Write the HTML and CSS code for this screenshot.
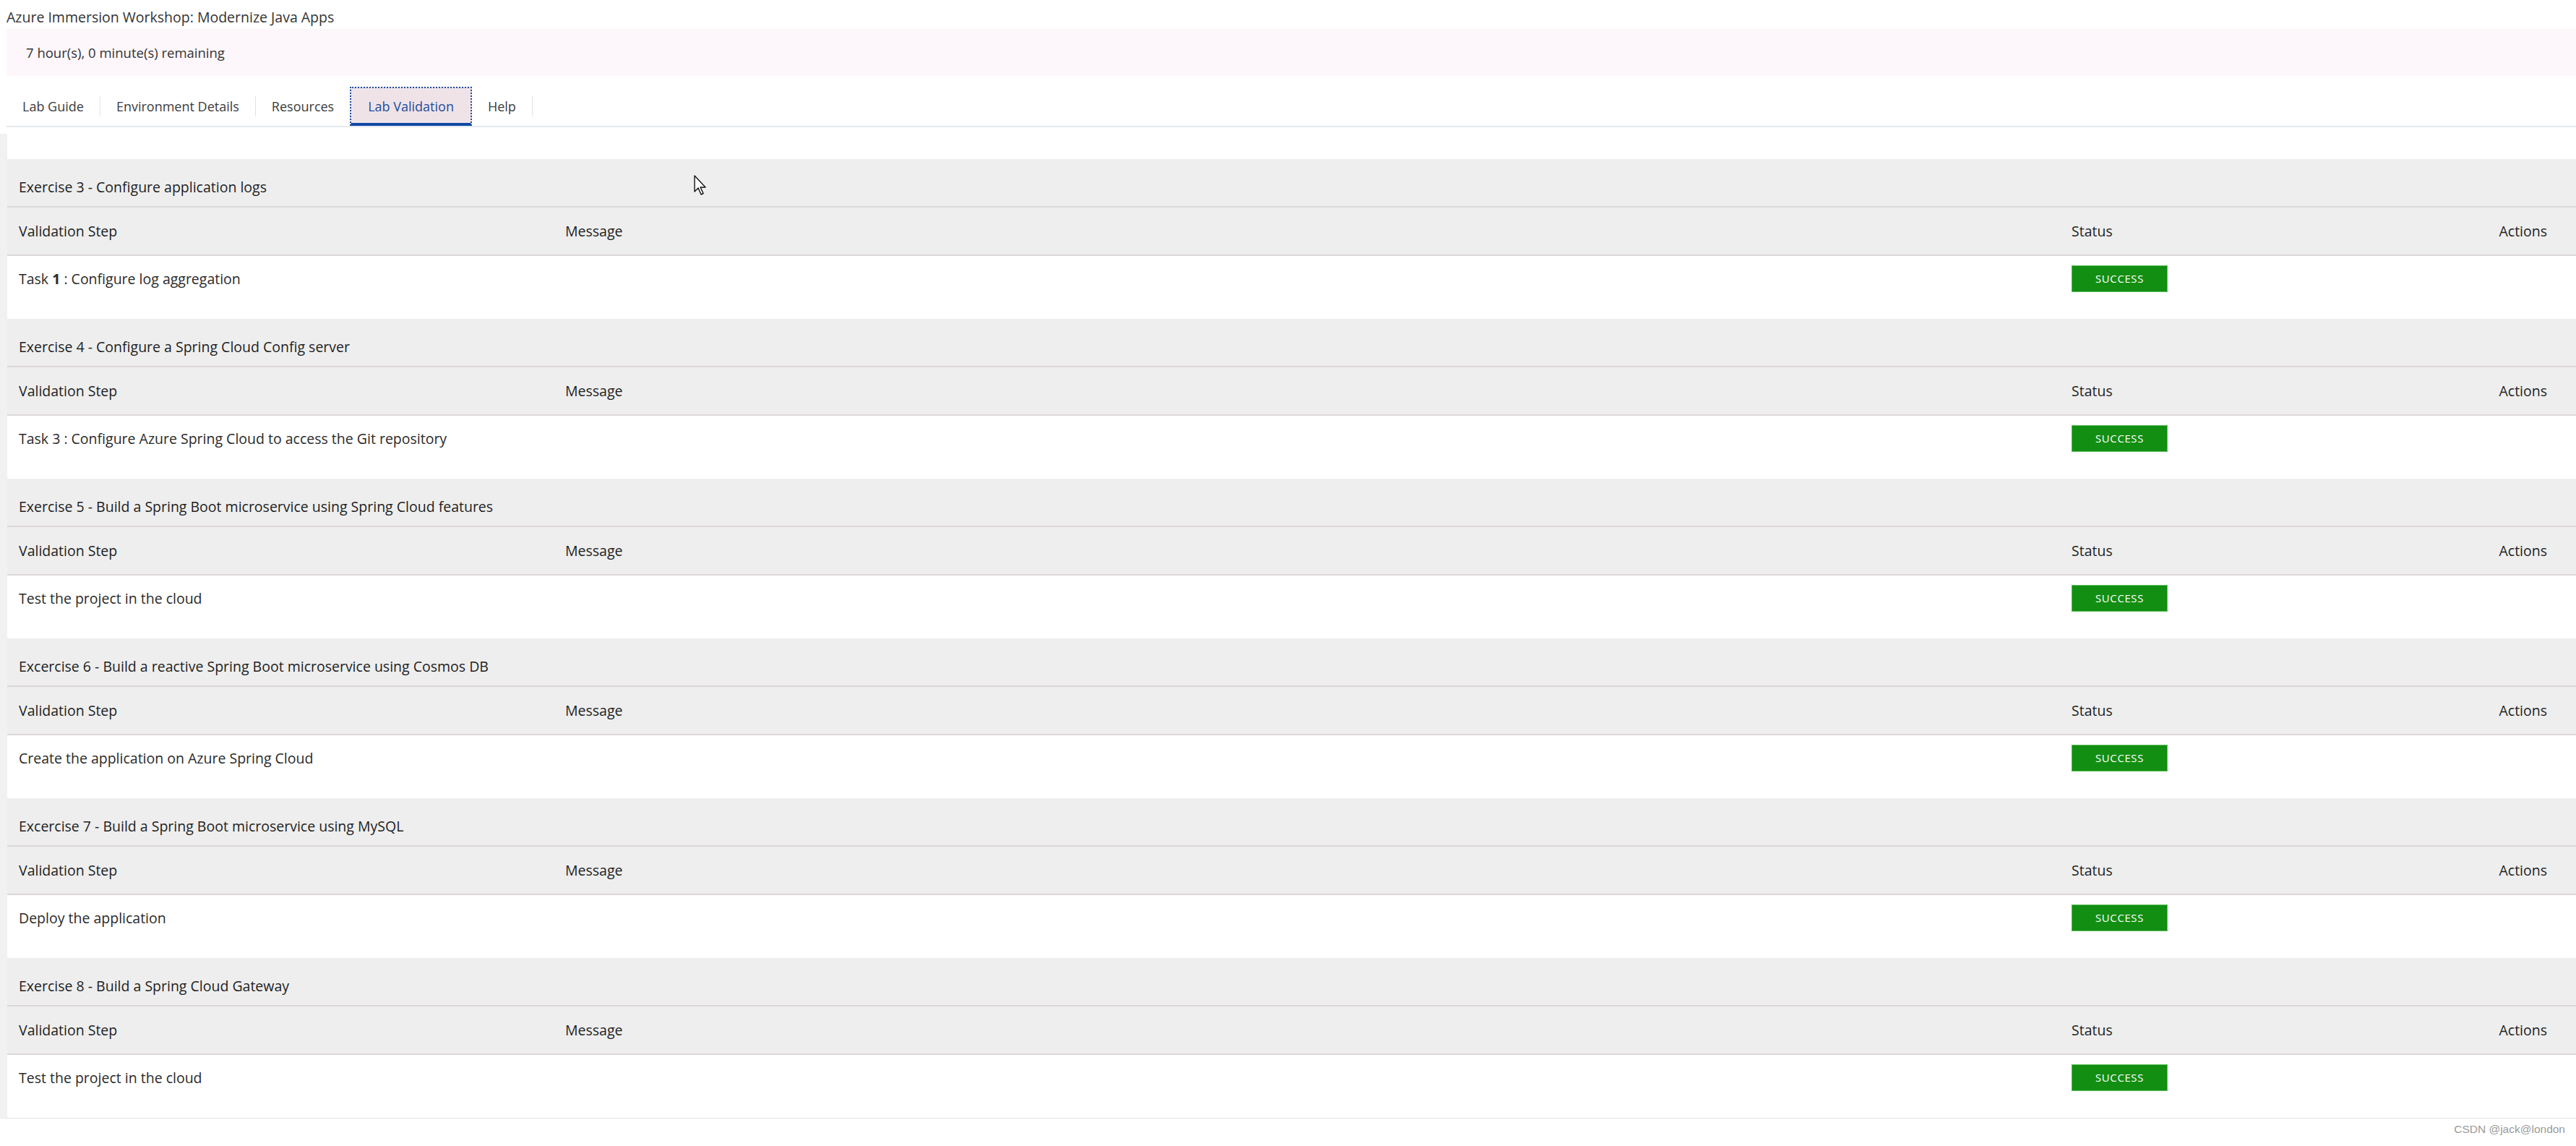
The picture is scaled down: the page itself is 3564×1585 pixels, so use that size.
FILE: index.html
```html
<!DOCTYPE html>
<html lang="en">
<head>
<meta charset="utf-8">
<title>Lab Validation</title>
<link rel="stylesheet" href="styles.css">
</head>
<body>
<div class="page">
  <div class="title">Azure Immersion Workshop: Modernize Java Apps</div>
  <div class="banner">7 hour(s), 0 minute(s) remaining</div>
  <nav class="tabs">
    <a class="tab">Lab Guide</a><span class="sep"></span>
    <a class="tab">Environment Details</a><span class="sep"></span>
    <a class="tab">Resources</a>
    <a class="tab active">Lab Validation</a>
    <a class="tab">Help</a><span class="sep"></span>
  </nav>
  <main class="main">
    <section class="ex">
      <div class="ex-head">Exercise 3 - Configure application logs</div>
      <div class="grid col-head"><div>Validation Step</div><div>Message</div><div>Status</div><div>Actions</div></div>
      <div class="grid row"><div class="cell">Task <b>1</b> : Configure log aggregation</div><div class="cell"></div><div><span class="badge">SUCCESS</span></div><div></div></div>
    </section>
    <section class="ex">
      <div class="ex-head">Exercise 4 - Configure a Spring Cloud Config server</div>
      <div class="grid col-head"><div>Validation Step</div><div>Message</div><div>Status</div><div>Actions</div></div>
      <div class="grid row"><div class="cell">Task 3 : Configure Azure Spring Cloud to access the Git repository</div><div class="cell"></div><div><span class="badge">SUCCESS</span></div><div></div></div>
    </section>
    <section class="ex">
      <div class="ex-head">Exercise 5 - Build a Spring Boot microservice using Spring Cloud features</div>
      <div class="grid col-head"><div>Validation Step</div><div>Message</div><div>Status</div><div>Actions</div></div>
      <div class="grid row"><div class="cell">Test the project in the cloud</div><div class="cell"></div><div><span class="badge">SUCCESS</span></div><div></div></div>
    </section>
    <section class="ex">
      <div class="ex-head">Excercise 6 - Build a reactive Spring Boot microservice using Cosmos DB</div>
      <div class="grid col-head"><div>Validation Step</div><div>Message</div><div>Status</div><div>Actions</div></div>
      <div class="grid row"><div class="cell">Create the application on Azure Spring Cloud</div><div class="cell"></div><div><span class="badge">SUCCESS</span></div><div></div></div>
    </section>
    <section class="ex">
      <div class="ex-head">Excercise 7 - Build a Spring Boot microservice using MySQL</div>
      <div class="grid col-head"><div>Validation Step</div><div>Message</div><div>Status</div><div>Actions</div></div>
      <div class="grid row"><div class="cell">Deploy the application</div><div class="cell"></div><div><span class="badge">SUCCESS</span></div><div></div></div>
    </section>
    <section class="ex">
      <div class="ex-head">Exercise 8 - Build a Spring Cloud Gateway</div>
      <div class="grid col-head"><div>Validation Step</div><div>Message</div><div>Status</div><div>Actions</div></div>
      <div class="grid row"><div class="cell">Test the project in the cloud</div><div class="cell"></div><div><span class="badge">SUCCESS</span></div><div></div></div>
    </section>
  </main>
  <footer class="footer">CSDN @jack@london</footer>
  <svg class="cursor" width="18" height="29" viewBox="0 0 18 29"><path d="M1 1 L1 23 L6 18 L10 27 L13 25.5 L9 17 L16 17 Z" fill="#fff" stroke="#111" stroke-width="1.4" stroke-linejoin="round"/></svg>
</div>
</body>
</html>
```
FILE: styles.css
```css
html, body {
  margin: 0;
  padding: 0;
  background: #fff;
}
body {
  font-family: "Open Sans", "Noto Sans", sans-serif;
  color: #1e1e1e;
}
.page {
  position: relative;
  width: 3564px;
  height: 1585px;
  overflow: hidden;
  padding-top: 11px;
  box-sizing: border-box;
}
.title {
  padding-left: 9px;
  font-size: 19.5px;
  line-height: 26px;
  color: #333;
  height: 29px;
}
.banner {
  margin-left: 9px;
  height: 65px;
  box-sizing: border-box;
  background: #fdf7fb;
  padding-left: 27px;
  font-size: 18.5px;
  line-height: 65px;
  color: #333;
}
.tabs {
  margin-top: 15px;
  margin-left: 9px;
  height: 54px;
  display: flex;
  align-items: center;
  border-bottom: 2px solid #e4e9ed;
}
.tab {
  height: 54px;
  box-sizing: border-box;
  padding: 0 22px;
  font-size: 18px;
  line-height: 54px;
  color: #3c3c3c;
}
.tab.active {
  background: #efe3e8;
  border: 2px dotted #1f4f9e;
  border-bottom: 4px solid #1148a6;
  line-height: 50px;
  padding: 0 23px;
  color: #1d4d9c;
}
.sep {
  width: 1px;
  height: 28px;
  background: #dfe4e8;
}
.main {
  margin-top: 9px;
  border-left: 10px solid #f1f1f1;
  border-bottom: 1px solid #e3e3e3;
  padding-top: 35px;
}
.ex-head {
  height: 67px;
  box-sizing: border-box;
  background: #eeeeee;
  border-bottom: 2px solid #ddd7d7;
  padding: 26px 16px 0;
  font-size: 19.5px;
  line-height: 26px;
  color: #1e1e1e;
}
.grid {
  display: grid;
  grid-template-columns: 756px 2084px 1fr auto;
  padding: 0 40px 0 16px;
  font-size: 19.5px;
  line-height: 26px;
}
.col-head {
  height: 67px;
  box-sizing: border-box;
  background: #eeeeee;
  border-bottom: 2px solid #ddd7d7;
  align-items: center;
}
.row {
  height: 87px;
  box-sizing: border-box;
  padding-top: 13px;
  align-items: start;
  color: #2a2a2a;
}
.row .cell {
  line-height: 37px;
}
.row b {
  font-weight: 700;
}
.badge {
  display: inline-block;
  width: 133px;
  height: 37px;
  box-sizing: border-box;
  background: #128e12;
  border: 1px solid #5bbf5b;
  color: #fff;
  font-size: 15px;
  letter-spacing: 0.6px;
  line-height: 35px;
  text-align: center;
}
.footer {
  display: flex;
  justify-content: flex-end;
  padding-right: 15px;
  font-family: "Liberation Sans", Arial, sans-serif;
  font-size: 15.5px;
  line-height: 30px;
  color: #9a9a9a;
}
.cursor {
  position: absolute;
  left: 960px;
  top: 242px;
}
```
